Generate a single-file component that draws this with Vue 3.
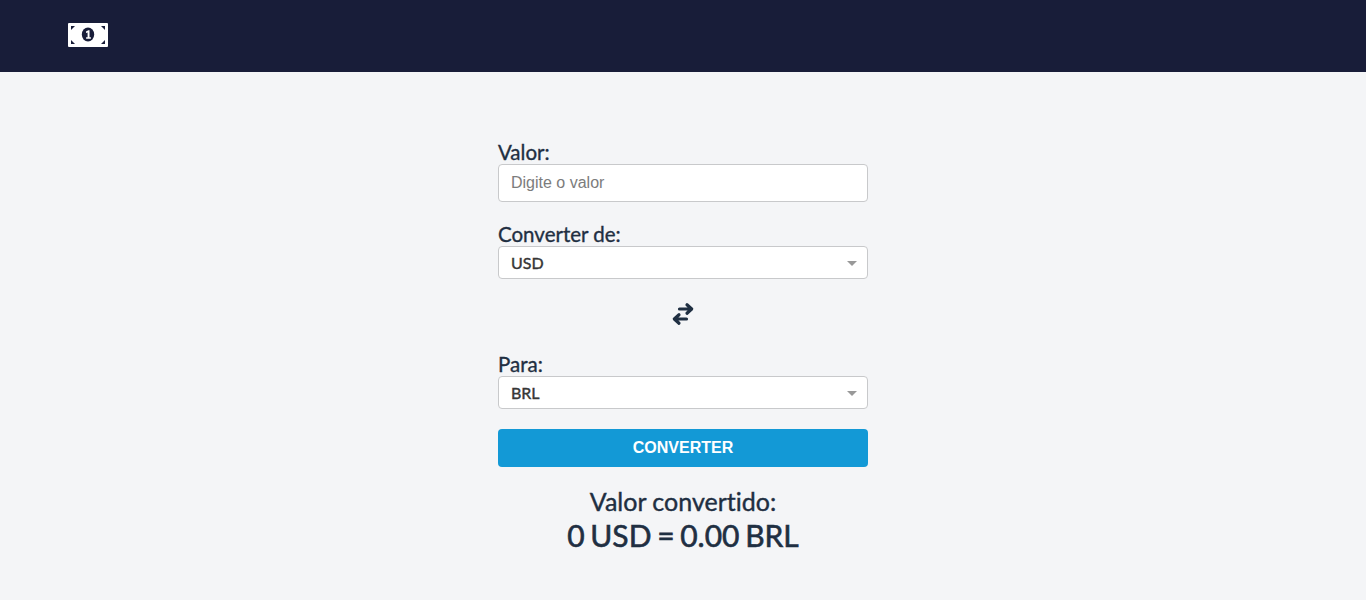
<template>
  <div class="page">
    <header class="topbar">
      <svg class="logo" viewBox="0 0 40 24" aria-label="Logo">
        <rect width="40" height="24" rx="1" fill="#fff" />
        <ellipse cx="20" cy="11.5" rx="6.2" ry="7" fill="#181d39" />
        <path fill="#fff" d="M18 8.4 20.4 7.3h1.1v6.9h1.4v1.6h-4.8v-1.6h1.5V9.5l-1.6.5Z" />
        <path fill="#181d39" d="M3 3h4L3 7ZM37 3h-4l4 4ZM3 21h4l-4-4ZM37 21h-4l4-4Z" />
      </svg>
    </header>

    <main class="content">
      <form class="converter" @submit.prevent="convert">
        <div class="field">
          <label for="amount">Valor:</label>
          <input id="amount" v-model="amount" type="text" placeholder="Digite o valor" />
        </div>

        <div class="field">
          <label for="from">Converter de:</label>
          <div class="select-wrap">
            <select id="from" v-model="from">
              <option v-for="c in currencies" :key="c" :value="c">{{ c }}</option>
            </select>
          </div>
        </div>

        <button type="button" class="swap" aria-label="Inverter moedas" @click="swap">
          <svg viewBox="0 0 24 24" width="24" height="24">
            <path fill="none" stroke="#1f2f42" stroke-width="3.2" stroke-linecap="round" stroke-linejoin="round" d="M8.5 7H20.5M16 2.8l4.7 4.2-4.7 4.2M15.5 17H3.5M8 12.8 3.3 17 8 21.2" />
          </svg>
        </button>

        <div class="field">
          <label for="to">Para:</label>
          <div class="select-wrap">
            <select id="to" v-model="to">
              <option v-for="c in currencies" :key="c" :value="c">{{ c }}</option>
            </select>
          </div>
        </div>

        <button type="submit" class="submit">CONVERTER</button>

        <div class="result">
          <h3>Valor convertido:</h3>
          <h2>{{ shownAmount }} {{ from }} = {{ converted }} {{ to }}</h2>
        </div>
      </form>
    </main>
  </div>
</template>

<script setup>
import { ref } from 'vue'

const currencies = ['USD', 'BRL', 'EUR']
const amount = ref('')
const from = ref('USD')
const to = ref('BRL')
const shownAmount = ref(0)
const converted = ref('0.00')

const convert = () => {
  shownAmount.value = Number(amount.value) || 0
  converted.value = (shownAmount.value * 5).toFixed(2)
}

const swap = () => {
  const current = from.value
  from.value = to.value
  to.value = current
}
</script>

<style>
body {
  background-color: #f4f5f7;
}
</style>

<style scoped>
.page {
  min-height: 600px;
  background-color: #f4f5f7;
  font-family: Lato, "Liberation Sans", sans-serif;
  font-variant-ligatures: none;
  color: #1f2f42;
}

.topbar {
  height: 72px;
  background-color: #181d39;
  display: flex;
  align-items: center;
  padding-left: 68px;
  box-sizing: border-box;
}

.logo {
  width: 40px;
  height: 24px;
  margin-top: -2px;
}

.content {
  display: flex;
  justify-content: center;
  padding-top: 70px;
}

.converter {
  width: 370px;
  display: flex;
  flex-direction: column;
}

.field {
  display: flex;
  flex-direction: column;
  margin-bottom: 22px;
}

.field label {
  font-size: 20.5px;
  line-height: 20px;
  padding-bottom: 2px;
  font-weight: 400;
  -webkit-text-stroke: 0.35px #1f2f42;
}

.field input {
  height: 38px;
  box-sizing: border-box;
  padding: 0 12px;
  background: #fff;
  border: 1px solid #c8c9cb;
  border-radius: 4px;
  font-family: "Liberation Sans", sans-serif;
  font-size: 16px;
  color: #333;
  outline: none;
}

.field input::placeholder {
  color: #7c7c7c;
}

.select-wrap {
  position: relative;
}

.select-wrap::after {
  content: '';
  position: absolute;
  right: 11px;
  top: 15px;
  border-left: 5px solid transparent;
  border-right: 5px solid transparent;
  border-top: 5px solid #999;
  pointer-events: none;
}

.select-wrap select {
  display: block;
  width: 100%;
  height: 33px;
  box-sizing: border-box;
  padding: 0 12px;
  appearance: none;
  background: #fff;
  border: 1px solid #c8c9cb;
  border-radius: 4px;
  font-family: Lato, sans-serif;
  font-size: 16px;
  font-weight: 400;
  -webkit-text-stroke: 0.4px #363636;
  color: #363636;
  outline: none;
}

.swap {
  align-self: center;
  display: flex;
  padding: 0;
  margin: 1px 0 28px;
  background: none;
  border: none;
  cursor: pointer;
}

.submit {
  height: 38px;
  margin-top: -2px;
  background-color: #1399d6;
  color: #fff;
  border: none;
  border-radius: 4px;
  font-family: "Liberation Sans", sans-serif;
  font-size: 16px;
  font-weight: 700;
  cursor: pointer;
}

.result {
  margin-top: 19px;
  text-align: center;
}

.result h3 {
  margin: 0;
  font-size: 25px;
  line-height: 31px;
  font-weight: 400;
  -webkit-text-stroke: 0.4px #1f2f42;
}

.result h2 {
  margin: 0;
  font-size: 30px;
  line-height: 36px;
  font-weight: 400;
  word-spacing: -2px;
  -webkit-text-stroke: 0.6px #1f2f42;
}
</style>
